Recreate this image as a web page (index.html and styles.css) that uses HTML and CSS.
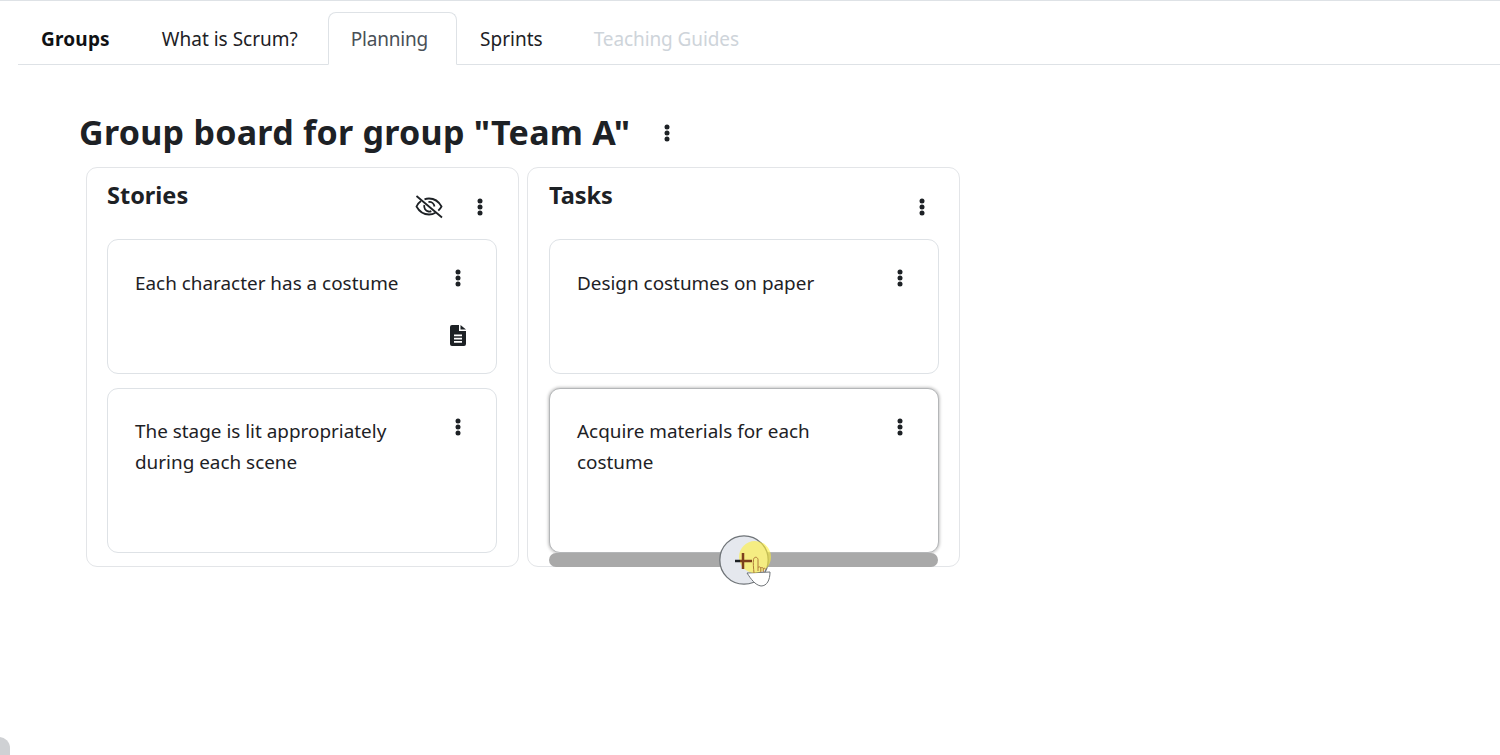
FILE: index.html
```html
<!DOCTYPE html>
<html lang="en">
<head>
<meta charset="utf-8">
<title>Group board</title>
<link rel="stylesheet" href="styles.css">
</head>
<body>
<nav class="tabs">
  <a class="tab tab-bold">Groups</a>
  <a class="tab">What is Scrum?</a>
  <a class="tab tab-active">Planning</a>
  <a class="tab">Sprints</a>
  <a class="tab tab-disabled">Teaching Guides</a>
</nav>
<main class="page">
  <div class="title-row">
    <h1 class="title">Group board for group "Team A"</h1>
    <svg class="dots dots-title" viewBox="0 0 6 18"><circle cx="3" cy="3" r="2.500"/><circle cx="3" cy="9" r="2.500"/><circle cx="3" cy="15" r="2.500"/></svg>
  </div>
  <div class="board">
    <section class="column">
      <header class="col-head">
        <h2 class="col-title">Stories</h2>
        <div class="col-icons">
          <svg class="eye" viewBox="0 0 28 24" fill="none" stroke="#1d2125" stroke-width="1.800"><path d="M1.500 1 27 22.500"/><path d="M6 6C4 7.500 2.300 9.500 1.500 11.500c2.500 4.500 7 8 12.500 8 2.500 0 4.500-.6 6.500-1.800"/><path d="M9.500 4.300C11 3.700 12.500 3.500 14 3.500c5.500 0 10 3.500 12.500 8-.8 1.500-1.900 3-3.200 4.200"/><path d="M9.300 10C8.700 13 10.500 16 13.500 16.500c1 .2 2 0 2.800-.4"/><path d="M13.500 7c3-.4 5.500 1.500 6 4.500"/></svg>
          <svg class="dots" viewBox="0 0 6 18"><circle cx="3" cy="3" r="2.500"/><circle cx="3" cy="9" r="2.500"/><circle cx="3" cy="15" r="2.500"/></svg>
        </div>
      </header>
      <article class="card card-short">
        <p class="card-text">Each character has a costume</p>
        <svg class="dots card-dots" viewBox="0 0 6 18"><circle cx="3" cy="3" r="2.500"/><circle cx="3" cy="9" r="2.500"/><circle cx="3" cy="15" r="2.500"/></svg>
        <svg class="doc" viewBox="0 0 16 21"><path fill-rule="evenodd" d="M2 0h7v6h7v13a2 2 0 0 1-2 2H2a2 2 0 0 1-2-2V2a2 2 0 0 1 2-2zM10.500 0 16 4.600H10.500zM4 9.500v1.700h8V9.500zM4 12.800v1.700h8v-1.700zM4 16.100v1.700h8v-1.700z"/></svg>
      </article>
      <article class="card card-tall">
        <p class="card-text">The stage is lit appropriately during each scene</p>
        <svg class="dots card-dots" viewBox="0 0 6 18"><circle cx="3" cy="3" r="2.500"/><circle cx="3" cy="9" r="2.500"/><circle cx="3" cy="15" r="2.500"/></svg>
      </article>
    </section>
    <section class="column column-tasks">
      <header class="col-head">
        <h2 class="col-title">Tasks</h2>
        <div class="col-icons">
          <svg class="dots" viewBox="0 0 6 18"><circle cx="3" cy="3" r="2.500"/><circle cx="3" cy="9" r="2.500"/><circle cx="3" cy="15" r="2.500"/></svg>
        </div>
      </header>
      <article class="card card-short">
        <p class="card-text">Design costumes on paper</p>
        <svg class="dots card-dots" viewBox="0 0 6 18"><circle cx="3" cy="3" r="2.500"/><circle cx="3" cy="9" r="2.500"/><circle cx="3" cy="15" r="2.500"/></svg>
      </article>
      <article class="card card-tall card-hover">
        <p class="card-text">Acquire materials for each costume</p>
        <svg class="dots card-dots" viewBox="0 0 6 18"><circle cx="3" cy="3" r="2.500"/><circle cx="3" cy="9" r="2.500"/><circle cx="3" cy="15" r="2.500"/></svg>
      </article>
      <div class="add-bar"></div>
      <div class="add-btn">
        <svg class="add-svg" viewBox="0 0 56 56">
          <circle cx="25" cy="25" r="24.200" fill="#e5e8ee" stroke="#6f7478" stroke-width="1.300"/>
          <path d="M28 38C32 44 36 50 42 51 48 51 51 45 51 37z" fill="#fff" stroke="#6f7478" stroke-width="1"/>
          <circle cx="36" cy="22" r="16" fill="#fff03a" fill-opacity=".6"/>
          <path d="M16 26h5" stroke="#1d2125" stroke-width="2.500" fill="none"/>
          <path d="M24 18v16M21 26h12" stroke="#7d3f1c" stroke-width="2.500" fill="none"/>
          <path d="M35 38C34.500 33 34 28 34.500 24.500c.5-3 4-3 4.500 0V36M39 32.500c1-1 2.300-.8 2.800.5V37M41.800 33c.8-.8 2-.6 2.500.5V37M44.300 33.500c.8-.5 2-.3 2.500 1" fill="none" stroke="#b07a3a" stroke-width="1"/>
        </svg>
      </div>
    </section>
  </div>
</main>
<div class="corner"></div>
</body>
</html>
```
FILE: styles.css
```css
* { box-sizing: border-box; }
html, body { height: 100%; }
body {
  margin: 0;
  background: #fff;
  color: #1d2125;
  font-family: "Noto Sans", "Open Sans", sans-serif;
  overflow: hidden;
  position: relative;
}
.tabs {
  border-top: 1px solid #dee2e6;
  margin: 0;
  padding: 11px 0 0 18px;
  height: 65px;
  display: flex;
  gap: 6px;
  position: relative;
}
.tabs::after {
  content: "";
  position: absolute;
  left: 18px;
  right: 0;
  bottom: 0;
  height: 1px;
  background: #dee2e6;
}
.tab {
  display: block;
  height: 53px;
  padding: 0 22px;
  border: 1px solid transparent;
  border-radius: 8px 8px 0 0;
  font-size: 19px;
  line-height: 53px;
  color: #1d2125;
  white-space: nowrap;
}
.tab-bold { font-weight: 700; color: #0f1114; letter-spacing: .2px; }
.tab-active {
  position: relative;
  z-index: 1;
  border-color: #dee2e6 #dee2e6 #fff;
  color: #495057;
  padding-right: 28px;
  margin-left: 1px;
  margin-right: -6px;
  letter-spacing: -.2px;
}
.tab-disabled { color: #ced4da; margin-left: -1px; letter-spacing: -.1px; }
.page { padding: 0 0 0 79px; }
.title-row {
  display: flex;
  align-items: center;
  height: 102px;
  padding: 33px 0 1px;
}
.title {
  margin: 0;
  font-size: 34px;
  font-weight: 700;
  line-height: 68px;
  letter-spacing: .27px;
  white-space: nowrap;
}
.dots { width: 6px; height: 18px; fill: #1d2125; flex: none; }
.dots-title { margin: 2px 0 0 34px; }
.board { display: flex; gap: 8px; margin-left: 7px; }
.column {
  position: relative;
  width: 433px;
  height: 400px;
  padding: 0 21px 0 20px;
  border: 1px solid #e3e5e8;
  border-radius: 11px;
}
.column-tasks { padding: 0 20px 0 21px; }
.col-head {
  display: flex;
  justify-content: space-between;
  height: 71px;
}
.col-title {
  margin: 0;
  font-size: 23.500px;
  font-weight: 700;
  line-height: 54px;
}
.col-icons {
  display: flex;
  align-items: center;
  gap: 34px;
  height: 78px;
  margin-right: 14px;
}
.eye { width: 28px; height: 24px; }
.card {
  position: relative;
  border: 1px solid #dee2e6;
  border-radius: 11px;
  background: #fff;
  padding: 28px 27px;
}
.card-short { height: 135px; margin-bottom: 14px; }
.card-tall { height: 165px; padding-top: 27px; }
.card-hover {
  border-color: #b4b6b8;
  box-shadow: 0 0 3px 1px rgba(0, 0, 0, .22);
}
.card-text {
  margin: 0;
  width: 280px;
  font-size: 18.900px;
  line-height: 31px;
}
.card-dots { position: absolute; top: 29px; right: 35px; }
.doc { position: absolute; left: 342px; top: 85px; width: 16px; height: 21px; fill: #1d2125; }
.add-bar {
  position: absolute;
  left: 21px;
  right: 21px;
  top: 385px;
  height: 14px;
  background: #a9a9a9;
  border-radius: 7px;
}
.add-btn {
  position: absolute;
  left: 191px;
  top: 367px;
  width: 56px;
  height: 56px;
}
.add-svg { display: block; width: 56px; height: 56px; }
.corner {
  position: absolute;
  left: -12px;
  top: 737px;
  width: 22px;
  height: 40px;
  border-radius: 11px;
  background: #cfd1d4;
}
```
